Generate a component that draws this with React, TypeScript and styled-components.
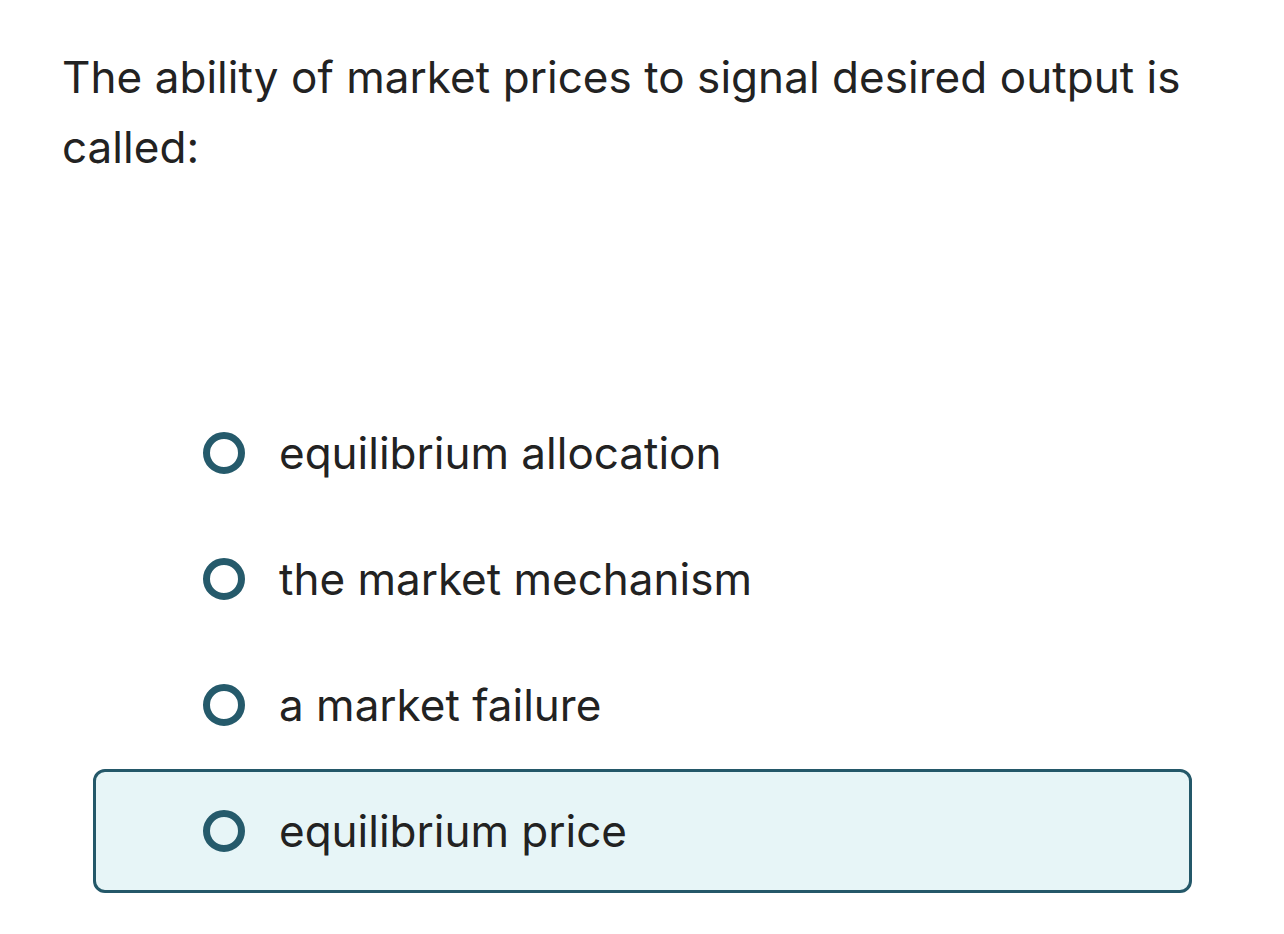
import React from "react";
import styled, { createGlobalStyle } from "styled-components";

const Global = createGlobalStyle`
  html, body { margin: 0; padding: 0; background: #ffffff; }
  body { font-family: Inter, "Liberation Sans", sans-serif; color: #222222; }
`;

const Page = styled.div`
  width: 1284px;
  height: 934px;
  box-sizing: border-box;
  padding: 42px 62px 0 62px;
`;

const Question = styled.p`
  margin: 0;
  font-size: 44px;
  line-height: 70px;
  letter-spacing: 0.05px;
  color: #222222;
`;

const Options = styled.div`
  margin-top: 209px;
  margin-left: 31px;
  width: 1099px;
  display: flex;
  flex-direction: column;
  gap: 2px;
`;

const Option = styled.label<{ $selected?: boolean }>`
  box-sizing: border-box;
  height: 124px;
  display: flex;
  align-items: center;
  gap: 34px;
  padding-left: 107px;
  border: 3px solid ${(p) => (p.$selected ? "#245869" : "transparent")};
  border-radius: 12px;
  background: ${(p) => (p.$selected ? "#e7f5f7" : "transparent")};
  font-size: 44px;
  color: #222222;
`;

const Ring = styled.span`
  flex: none;
  width: 42px;
  height: 42px;
  box-sizing: border-box;
  border: 7px solid #255a6b;
  border-radius: 50%;
`;

const items = [
  "equilibrium allocation",
  "the market mechanism",
  "a market failure",
  "equilibrium price",
];

export default function App() {
  return (
    <Page>
      <Global />
      <Question>
        The ability of market prices to signal desired output is called:
      </Question>
      <Options>
        {items.map((t, i) => (
          <Option key={t} $selected={i === 3}>
            <Ring />
            <span>{t}</span>
          </Option>
        ))}
      </Options>
    </Page>
  );
}
